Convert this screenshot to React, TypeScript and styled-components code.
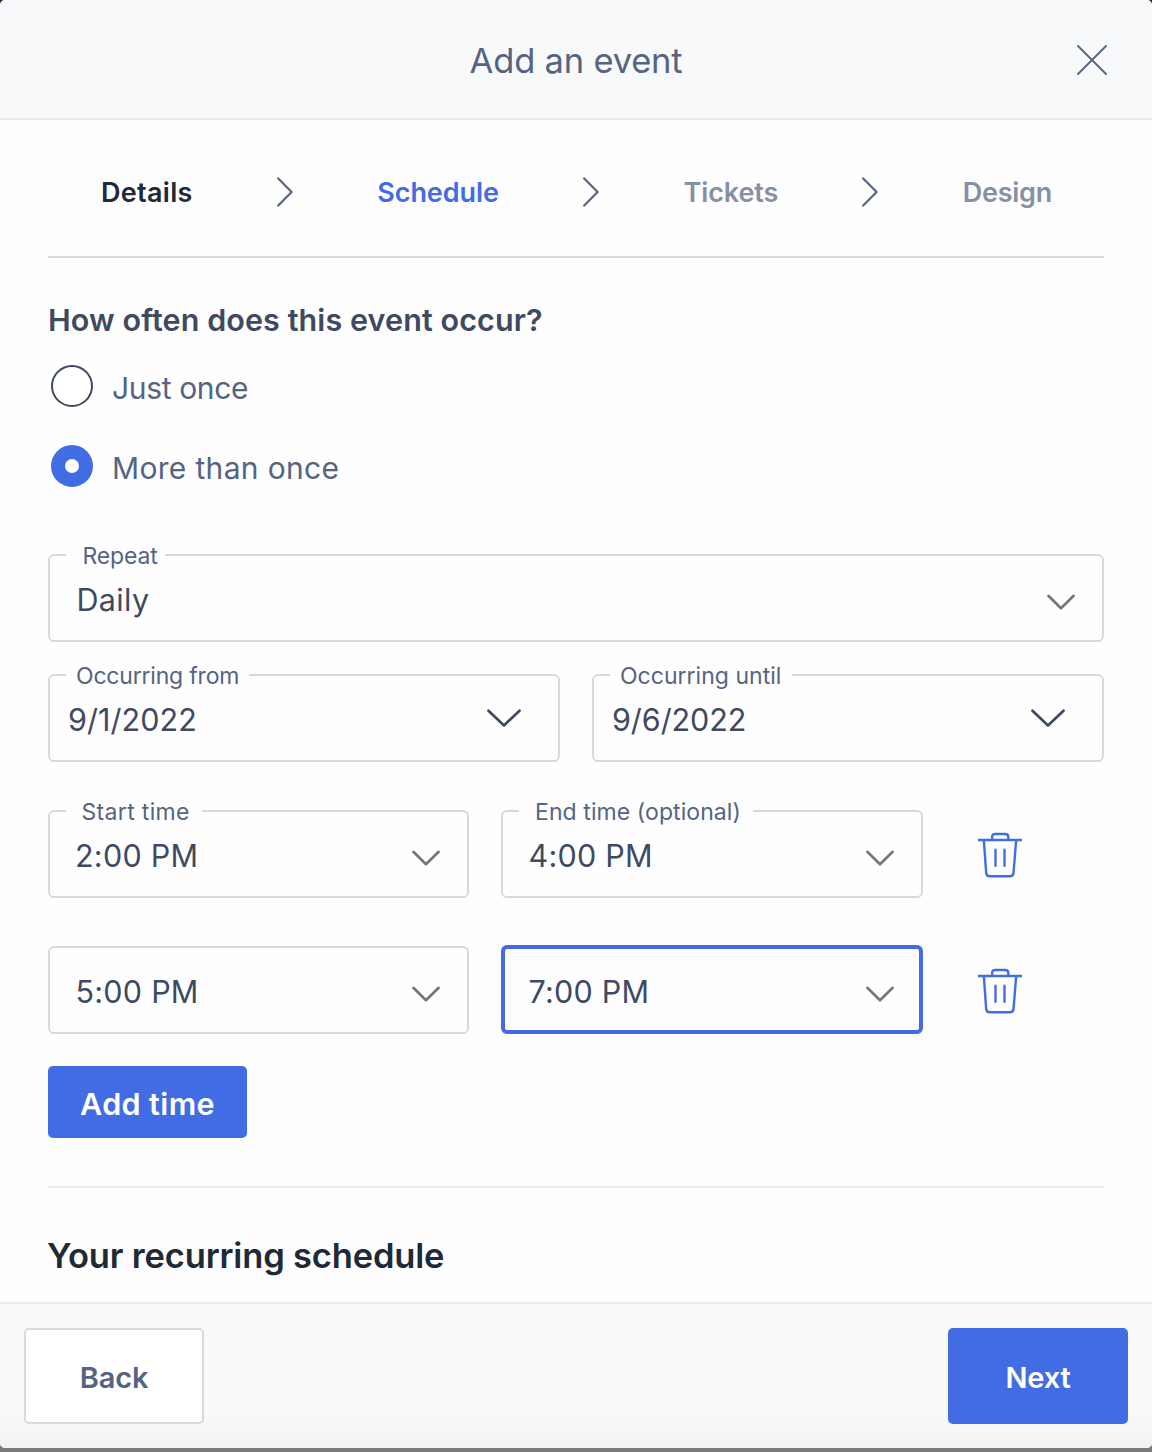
import React from "react";
import styled, { createGlobalStyle } from "styled-components";

const color = {
  ink: "#222936",
  heading: "#3f4a62",
  body: "#556481",
  muted: "#868fa3",
  blue: "#426ce4",
  line: "#d5dade",
  soft: "#e8eaee",
  panel: "#f8f9fb",
  caret: "#757575",
};

const GlobalStyle = createGlobalStyle`
  *, *::before, *::after { box-sizing: border-box; }
  body {
    margin: 0;
    background: #7a7a7a;
    font-family: Inter, "Liberation Sans", sans-serif;
    font-optical-sizing: none;
  }
  button { font-family: inherit; cursor: pointer; }
`;

const Backdrop = styled.div`
  height: 1452px;
  background: linear-gradient(#1f2430 0 50%, #7a7a7a 50%);
  overflow: hidden;
`;

const Modal = styled.section`
  display: flex;
  flex-direction: column;
  height: 1448px;
  background: #fefefe;
  border-radius: 5px;
  overflow: hidden;
`;

const Header = styled.header`
  display: grid;
  grid-template-columns: 76px 1fr 76px;
  align-items: center;
  height: 120px;
  background: ${color.panel};
  border-bottom: 2px solid ${color.soft};
`;

const Title = styled.h1`
  grid-column: 2;
  margin: 0;
  padding-top: 3px;
  text-align: center;
  font-size: 34.5px;
  font-weight: 400;
  line-height: 44px;
  letter-spacing: -0.2px;
  color: ${color.body};
`;

const IconButton = styled.button`
  display: flex;
  padding: 0;
  border: 0;
  background: none;

  svg { flex: none; }
`;

const CloseButton = styled(IconButton)`
  justify-self: start;
  margin-top: 2px;
`;

const Body = styled.main`
  flex: 1;
  min-height: 0;
  padding: 0 48px;
`;

const Steps = styled.nav`
  display: flex;
  align-items: center;
  justify-content: space-between;
  height: 138px;
  padding: 8px 52px 0 53px;
  border-bottom: 2px solid ${color.line};
`;

const Step = styled.span<{ $color: string; $spacing: number }>`
  padding-top: 1px;
  font-size: 27px;
  font-weight: 600;
  line-height: 36px;
  letter-spacing: ${(p) => p.$spacing}px;
  color: ${(p) => p.$color};
`;

const Question = styled.h2`
  margin: 40px 0 4px;
  font-size: 30.5px;
  font-weight: 600;
  line-height: 44px;
  letter-spacing: 0.09px;
  color: ${color.heading};
`;

const RadioRow = styled.label<{ $spacing: number }>`
  display: flex;
  align-items: center;
  gap: 19px;
  height: 80px;
  padding-left: 3px;
  font-size: 30px;
  letter-spacing: ${(p) => p.$spacing}px;
  color: ${color.body};
`;

const RadioText = styled.span`
  line-height: 40px;
  padding-top: 4px;
`;

const Radio = styled.span<{ $checked?: boolean }>`
  width: 42px;
  height: 42px;
  border-radius: 50%;
  background: #fff;
  border: ${(p) => (p.$checked ? `14px solid ${color.blue}` : `2px solid ${color.heading}`)};
`;

const Stack = styled.div`
  display: grid;
  gap: 32px;
  margin-top: 48px;
`;

const DateRow = styled.div`
  display: grid;
  grid-template-columns: 1fr 1fr;
  gap: 32px;
`;

const TimeRows = styled.div`
  display: grid;
  gap: 48px;
  margin: 48px 0 32px;
`;

const TimeRow = styled.div`
  display: grid;
  grid-template-columns: 421px 422px auto;
  column-gap: 32px;
  align-items: center;
  height: 88px;
`;

const TrashButton = styled(IconButton)`
  justify-self: start;
  margin: 2px 0 0 23px;
`;

const Field = styled.div<{ $left: number; $right: number; $active?: boolean }>`
  position: relative;
  display: flex;
  align-items: center;
  justify-content: space-between;
  height: ${(p) => (p.$active ? 89 : 88)}px;
  margin-top: ${(p) => (p.$active ? -1 : 0)}px;
  padding: ${(p) => (p.$active ? 5 : 4)}px ${(p) => p.$right - (p.$active ? 2 : 0)}px 0
    ${(p) => p.$left - (p.$active ? 2 : 0)}px;
  border: ${(p) => (p.$active ? `4px solid ${color.blue}` : `2px solid ${color.line}`)};
  border-radius: 6px;
`;

const FieldLabel = styled.span<{ $width: number; $indent: number; $spacing: number }>`
  position: absolute;
  top: -14px;
  left: 16px;
  width: ${(p) => p.$width}px;
  padding-left: ${(p) => p.$indent}px;
  background: #fefefe;
  font-size: 23px;
  line-height: 28px;
  letter-spacing: ${(p) => p.$spacing}px;
  white-space: nowrap;
  color: ${color.body};
`;

const Value = styled.span<{ $spacing: number }>`
  font-size: 30.5px;
  line-height: 40px;
  letter-spacing: ${(p) => p.$spacing}px;
  color: ${color.heading};
`;

const CaretBox = styled.span<{ $shift: number }>`
  display: flex;
  position: relative;
  top: ${(p) => p.$shift}px;
`;

const AddButton = styled.button`
  display: block;
  width: 199px;
  height: 72px;
  padding: 3px 0 0;
  border: 0;
  border-radius: 5px;
  background: ${color.blue};
  color: #fff;
  font-size: 30.5px;
  font-weight: 600;
  letter-spacing: 0.4px;
`;

const ScheduleTitle = styled.h2`
  margin: 0 0 0 -1px;
  padding: 44px 0 0;
  font-size: 34.5px;
  font-weight: 600;
  line-height: 44px;
  letter-spacing: -0.18px;
  color: ${color.ink};
`;

const Divider = styled.hr`
  height: 2px;
  margin: 48px 0 2px;
  border: 0;
  background: ${color.soft};
`;

const Footer = styled.footer`
  display: flex;
  justify-content: space-between;
  height: 146px;
  padding: 24px;
  border-top: 2px solid ${color.soft};
  background: linear-gradient(${color.panel} 0 calc(100% - 36px), #f1f3f4);
`;

const FooterButton = styled.button<{ $primary?: boolean }>`
  width: 180px;
  height: 96px;
  padding: 3px 0 0;
  border: ${(p) => (p.$primary ? "0" : `2px solid ${color.line}`)};
  border-radius: 5px;
  background: ${(p) => (p.$primary ? color.blue : "#fff")};
  color: ${(p) => (p.$primary ? "#fff" : color.body)};
  font-size: 29px;
  font-weight: 600;
  letter-spacing: -0.15px;
`;

const CloseIcon = () => (
  <svg width="32" height="32" viewBox="0 0 32 32" fill="none" stroke={color.body} strokeWidth="1.8" strokeLinecap="round">
    <path d="M2 2 30 30M30 2 2 30" />
  </svg>
);

const StepArrow = () => (
  <svg width="16" height="30" viewBox="0 0 16 30" fill="none" stroke={color.body} strokeWidth="2.2" strokeLinecap="round" strokeLinejoin="round">
    <path d="M1.2 1.4 14.6 15 1.2 28.6" />
  </svg>
);

const SelectCaret = () => (
  <CaretBox $shift={2}>
    <svg width="28" height="16" viewBox="0 0 28 16" fill="none" stroke={color.caret} strokeWidth="2.6" strokeLinecap="round" strokeLinejoin="round">
      <path d="M1.4 1.8 14 14.2 26.6 1.8" />
    </svg>
  </CaretBox>
);

const DateCaret = () => (
  <CaretBox $shift={-2}>
    <svg width="34" height="18" viewBox="0 0 34 18" fill="none" stroke={color.heading} strokeWidth="2.7" strokeLinecap="round" strokeLinejoin="round">
      <path d="M1.5 1.7 17 16.4 32.5 1.7" />
    </svg>
  </CaretBox>
);

const TrashIcon = () => (
  <svg width="44" height="46" viewBox="0 0 44 46" fill="none" stroke={color.blue} strokeWidth="2.4">
    <path d="M0 8H44M14.2 8V5Q14.2 2 17.2 2H27.3Q30.3 2 30.3 5V8" />
    <path d="M5.8 8 8.2 40.8Q8.5 44.2 11.7 44.2H32Q35.2 44.2 35.5 40.8L38.2 8" />
    <path d="M17.5 17.8V33.8M26.5 17.8V33.8" strokeLinecap="round" />
  </svg>
);

type SelectProps = {
  value: string;
  spacing: number;
  left: number;
  right?: number;
  active?: boolean;
  date?: boolean;
  label?: { text: string; width: number; indent: number; spacing: number };
};

const SelectField = ({ value, spacing, left, right = 27, active, date, label }: SelectProps) => (
  <Field $left={left} $right={right} $active={active}>
    {label && (
      <FieldLabel $width={label.width} $indent={label.indent} $spacing={label.spacing}>
        {label.text}
      </FieldLabel>
    )}
    <Value $spacing={spacing}>{value}</Value>
    {date ? <DateCaret /> : <SelectCaret />}
  </Field>
);

const DeleteTime = () => (
  <TrashButton aria-label="Delete time">
    <TrashIcon />
  </TrashButton>
);

export default function App() {
  return (
    <Backdrop>
      <GlobalStyle />
      <Modal>
        <Header>
          <Title>Add an event</Title>
          <CloseButton aria-label="Close">
            <CloseIcon />
          </CloseButton>
        </Header>
        <Body>
          <Steps>
            <Step $color={color.ink} $spacing={0.3}>Details</Step>
            <StepArrow />
            <Step $color={color.blue} $spacing={-0.05}>Schedule</Step>
            <StepArrow />
            <Step $color={color.muted} $spacing={-0.12}>Tickets</Step>
            <StepArrow />
            <Step $color={color.muted} $spacing={-0.25}>Design</Step>
          </Steps>

          <Question>How often does this event occur?</Question>
          <RadioRow $spacing={-0.35}>
            <Radio />
            <RadioText>Just once</RadioText>
          </RadioRow>
          <RadioRow $spacing={0.33}>
            <Radio $checked />
            <RadioText>More than once</RadioText>
          </RadioRow>

          <Stack>
            <SelectField value="Daily" spacing={0.36} left={26.5} label={{ text: "Repeat", width: 98.5, indent: 16.5, spacing: -0.15 }} />
            <DateRow>
              <SelectField date value="9/1/2022" spacing={0.08} left={18} right={37} label={{ text: "Occurring from", width: 183, indent: 10, spacing: -0.2 }} />
              <SelectField date value="9/6/2022" spacing={-0.06} left={18} right={37} label={{ text: "Occurring until", width: 182, indent: 10, spacing: 0.02 }} />
            </DateRow>
          </Stack>

          <TimeRows>
            <TimeRow>
              <SelectField value="2:00 PM" spacing={0.25} left={25} label={{ text: "Start time", width: 136, indent: 15.5, spacing: 0.33 }} />
              <SelectField value="4:00 PM" spacing={0.25} left={25.5} label={{ text: "End time (optional)", width: 234, indent: 16, spacing: 0.08 }} />
              <DeleteTime />
            </TimeRow>
            <TimeRow>
              <SelectField value="5:00 PM" spacing={0.25} left={25.5} />
              <SelectField active value="7:00 PM" spacing={0.25} left={25.5} />
              <DeleteTime />
            </TimeRow>
          </TimeRows>

          <AddButton>Add time</AddButton>
          <Divider />
          <ScheduleTitle>Your recurring schedule</ScheduleTitle>
        </Body>
        <Footer>
          <FooterButton>Back</FooterButton>
          <FooterButton $primary>Next</FooterButton>
        </Footer>
      </Modal>
    </Backdrop>
  );
}
